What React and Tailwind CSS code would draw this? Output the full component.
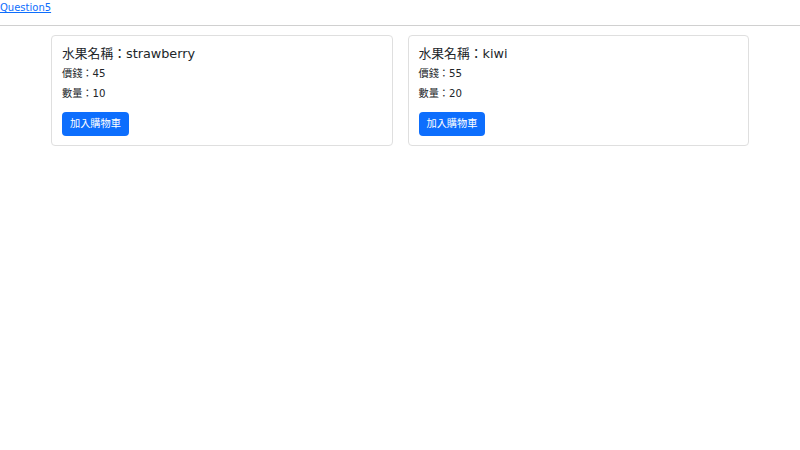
import React from "react";

const fruits = [
  { name: "strawberry", price: 45, qty: 10 },
  { name: "kiwi", price: 55, qty: 20 },
];

const FruitCard = ({ fruit }) => {
  return (
    <div className="border border-[#dfdfdf] rounded-[4px] bg-white px-[10px] pt-[10px] pb-[9px]">
      <h5 className="text-[12.8px] leading-[15px] mb-[5px] text-[#212529]">
        水果名稱：{fruit.name}
      </h5>
      <p className="text-[10.2px] leading-[15px] mb-[5px] text-[#212529]">價錢：{fruit.price}</p>
      <p className="text-[10.2px] leading-[15px] mb-[9px] text-[#212529]">數量：{fruit.qty}</p>
      <button className="h-[24px] px-[8px] rounded-[4px] bg-[#0d6efd] text-white text-[10.2px] leading-[15px]">
        加入購物車
      </button>
    </div>
  );
};

const App = () => {
  return (
    <div
      className="min-h-[450px] bg-white"
      style={{ fontFamily: '"DejaVu Sans", "Noto Sans CJK TC", sans-serif' }}
    >
      <a href="#" className="block text-[10px] leading-[15px] text-[#0d6efd] underline w-fit">
        Question5
      </a>
      <hr className="mt-[10px] mb-[9px] border-t border-[#d0d0d0]" />
      <div className="mx-[51px] grid grid-cols-2 gap-[15px]">
        {fruits.map((fruit) => (
          <FruitCard key={fruit.name} fruit={fruit} />
        ))}
      </div>
    </div>
  );
};

export default App;
